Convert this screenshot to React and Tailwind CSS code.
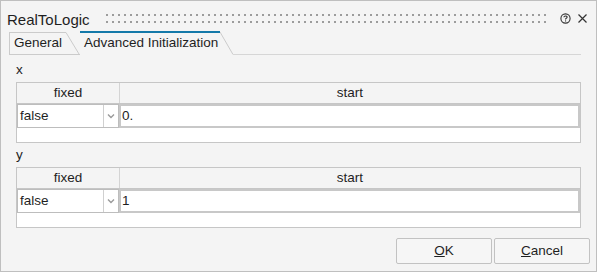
import React from "react";

// Small chevron used inside the combo cell
function Chevron() {
  return (
    <svg width="8" height="6" viewBox="0 0 8 6">
      <path d="M1 1.5 L4 4.5 L7 1.5" fill="none" stroke="#9a9a9a" strokeWidth="1.4" />
    </svg>
  );
}

// One variable block: label + fixed/start table
function VarTable({ name, start }) {
  return (
    <div className="flex flex-col">
      <div className="h-[16px] leading-[16px] mt-[4px] mb-[4px]">{name}</div>
      <div className="flex flex-col border border-[#c6c6c6] bg-white">
        {/* Header row */}
        <div className="flex h-[21px] bg-[#f4f4f4] border-b border-[#c6c6c6] leading-[20px]">
          <div className="w-[103px] border-r border-[#d4d4d4] text-center">fixed</div>
          <div className="flex-1 text-center">start</div>
        </div>
        {/* Editor row */}
        <div className="flex h-[24px]">
          <div className="w-[102px] flex border border-[#bdbdbd] bg-white">
            <div className="flex-1 pl-[2px] leading-[22px]">false</div>
            <div className="w-[15px] border-l border-[#d0d0d0] flex items-center justify-center">
              <Chevron />
            </div>
          </div>
          <div className="flex-1 border-2 border-[#c8c8c8] bg-white pl-[1px] leading-[20px]">
            {start}
          </div>
        </div>
        {/* Empty row */}
        <div className="h-[14px] bg-white" />
      </div>
    </div>
  );
}

export default function App() {
  return (
    <div className="w-[597px] h-[272px] bg-[#f4f4f4] border border-[#bfbfbf] flex flex-col font-['Liberation_Sans',Arial,sans-serif] text-[13.5px] text-[#1f1f1f]">
      {/* Title bar */}
      <div className="h-[30px] flex items-start pt-[10px] pl-[6px] pr-[9px]">
        <div className="text-[15px] leading-[17px]">RealToLogic</div>
        <svg className="flex-1 h-[9px] mt-[3px] ml-[16px] mr-[12px]">
          <defs>
            <pattern id="grip" width="6" height="7" patternUnits="userSpaceOnUse">
              <rect width="2" height="2" fill="#9c9c9c" />
            </pattern>
          </defs>
          <rect width="100%" height="100%" fill="url(#grip)" />
        </svg>
        <svg width="11" height="11" viewBox="0 0 11 11" className="mt-[2px]">
          <circle cx="5.5" cy="5.5" r="4.6" fill="none" stroke="#333" strokeWidth="1.1" />
          <path d="M3.9 4.3 C3.9 2.6 7.1 2.6 7.1 4.2 C7.1 5.3 5.5 5.3 5.5 6.4" fill="none" stroke="#333" strokeWidth="1.1" />
          <rect x="5" y="7.4" width="1.1" height="1.1" fill="#333" />
        </svg>
        <svg width="9" height="9" viewBox="0 0 9 9" className="mt-[3px] ml-[7px]">
          <path d="M0.5 0.5 L8.5 8.5 M8.5 0.5 L0.5 8.5" stroke="#333" strokeWidth="1.2" />
        </svg>
      </div>

      {/* Tabs */}
      <div className="h-[24px] flex items-end pl-[8px] pr-[15px]">
        <div className="h-[23px] flex">
          <div className="w-[57px] border-l border-t border-b border-[#cbcbcb] pl-[4px] leading-[20px]">
            General
          </div>
          <svg width="14" height="23" viewBox="0 0 14 23">
            <path d="M0 0.5 L13 22" fill="none" stroke="#cbcbcb" strokeWidth="1" />
            <path d="M0 22.5 L14 22.5" fill="none" stroke="#cbcbcb" strokeWidth="1" />
          </svg>
        </div>
        <div className="h-[24px] flex">
          <div className="w-[140px] border-t-2 border-[#1479a9] pl-[4px] leading-[20px]">
            Advanced Initialization
          </div>
          <svg width="13" height="24" viewBox="0 0 13 24">
            <path d="M0 1 L13 23.5" fill="none" stroke="#cbcbcb" strokeWidth="1" />
          </svg>
        </div>
        <div className="flex-1 h-[1px] bg-[#d6d6d6]" />
      </div>

      {/* Content */}
      <div className="flex flex-col px-[15px] pt-[3px]">
        <VarTable name="x" start="0." />
        <VarTable name="y" start="1" />
      </div>

      {/* Footer buttons */}
      <div className="mt-auto flex justify-end gap-[2px] pr-[6px] pb-[7px]">
        <button className="w-[96px] h-[26px] border border-[#c2c2c2] rounded-[2px] bg-[#f6f6f6]">
          <span className="underline">O</span>K
        </button>
        <button className="w-[96px] h-[26px] border border-[#c2c2c2] rounded-[2px] bg-[#f6f6f6]">
          <span className="underline">C</span>ancel
        </button>
      </div>
    </div>
  );
}
